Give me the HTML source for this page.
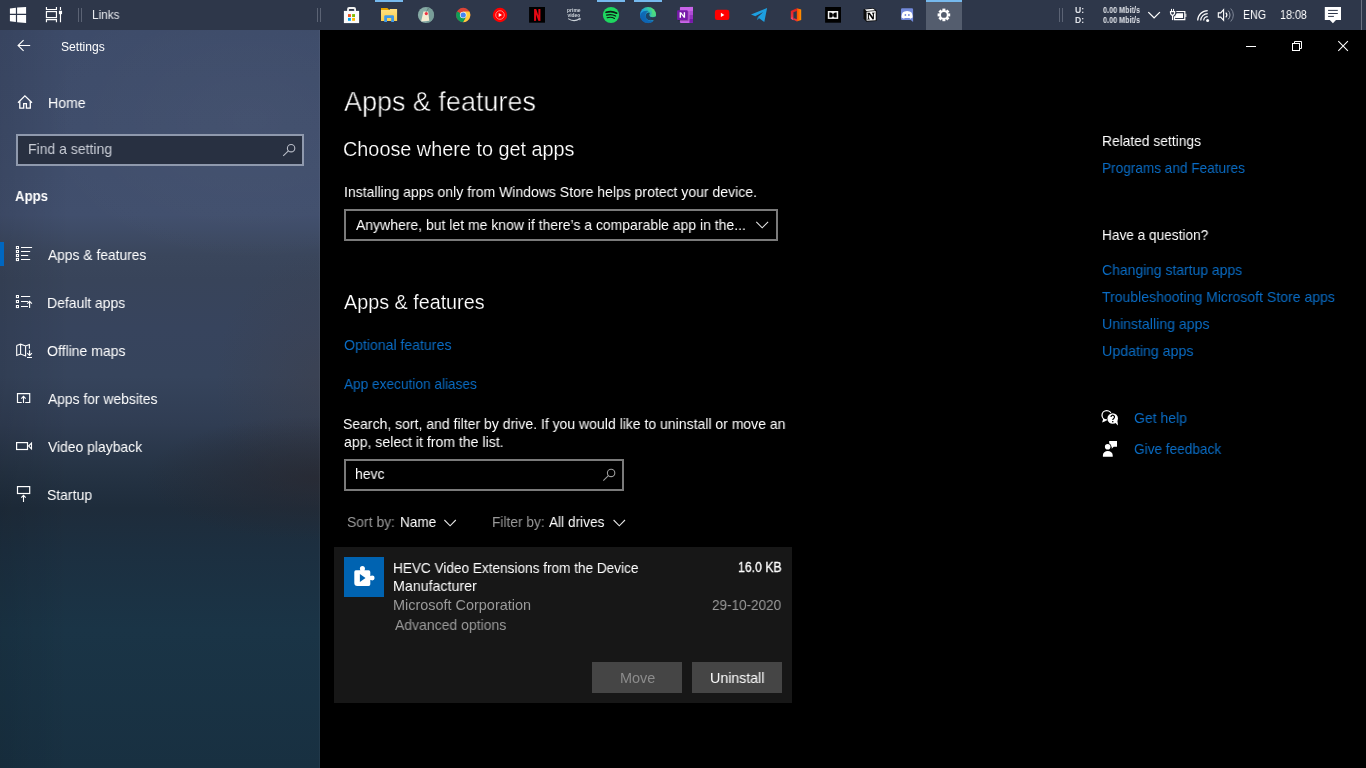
<!DOCTYPE html>
<html><head><meta charset="utf-8"><title>Settings</title>
<style>
*{box-sizing:border-box}
html,body{margin:0;padding:0;width:1366px;height:768px;overflow:hidden;background:#000;font-family:"Liberation Sans",sans-serif}
.t{position:absolute;white-space:pre;transform-origin:0 0;display:block;will-change:transform;-webkit-font-smoothing:antialiased}
.a{position:absolute}
#taskbar{left:0;top:0;width:1366px;height:30px;background:#2e374a}
#side{left:0;top:30px;width:320px;height:738px;background:
 radial-gradient(ellipse 170px 62px at 315px 448px, rgba(40,40,48,.72), rgba(40,40,48,0) 100%),
 radial-gradient(ellipse 110px 130px at 325px 350px, rgba(66,62,68,.38), rgba(66,62,68,0) 100%),
 linear-gradient(90deg, rgba(0,0,0,.09) 0, rgba(0,0,0,0) 70px),
 radial-gradient(ellipse 220px 150px at 250px 90px, rgba(255,255,255,.028), rgba(255,255,255,0) 100%),
 linear-gradient(180deg,#3d4b69 0px,#3f4d6b 100px,#414f6d 185px,#3a465c 225px,#38445a 250px,#37445d 298px,#36445c 346px,#303d53 394px,#253344 442px,#1e2c3b 478px,#1c2f40 520px,#1a3446 600px,#183041 738px)}
#main{left:320px;top:30px;width:1046px;height:738px;background:#000}
.ind{position:absolute;top:0;height:2px;width:28px;background:#76b9ed}
svg{position:absolute;overflow:visible;will-change:transform}

</style></head>
<body>
<div id="taskbar" class="a"></div>
<div id="side" class="a"></div>
<div id="main" class="a"></div>
<!-- taskbar active/indicators -->
<div class="a" style="left:926px;top:0;width:36px;height:30px;background:#545d6e"></div>
<div class="ind" style="left:375px"></div>
<div class="ind" style="left:597px"></div>
<div class="ind" style="left:634px"></div>
<div class="ind" style="left:926px;width:36px"></div>
<!-- taskbar separators -->
<div class="a" style="left:78px;top:8px;width:1px;height:14px;background:#5b6374"></div>
<div class="a" style="left:81px;top:8px;width:1px;height:14px;background:#5b6374"></div>
<div class="a" style="left:317px;top:8px;width:1px;height:14px;background:#5b6374"></div>
<div class="a" style="left:320px;top:8px;width:1px;height:14px;background:#5b6374"></div>
<div class="a" style="left:1059px;top:8px;width:1px;height:14px;background:#5b6374"></div>
<div class="a" style="left:1062px;top:8px;width:1px;height:14px;background:#5b6374"></div>
<div class="a" style="left:1361px;top:0;width:1px;height:30px;background:#6a7181"></div>
<!-- sidebar -->
<div class="a" style="left:0;top:242px;width:4px;height:24px;background:#0067c0"></div>
<div class="a" style="left:16px;top:134px;width:288px;height:32px;border:2px solid #8f99ad;background:#283041"></div>
<div class="a" style="left:319px;top:30px;width:1px;height:738px;background:rgba(255,255,255,.045)"></div>
<!-- main boxes -->
<div class="a" style="left:344px;top:209px;width:434px;height:32px;border:2px solid #7a7a7a;background:#000"></div>
<div class="a" style="left:344px;top:459px;width:280px;height:32px;border:2px solid #7a7a7a;background:#000"></div>
<div class="a" style="left:334px;top:547px;width:458px;height:156px;background:#171717"></div>
<div class="a" style="left:344px;top:557px;width:40px;height:40px;background:#0063b1"></div>
<div class="a" style="left:592px;top:662px;width:90px;height:31px;background:#454545"></div>
<div class="a" style="left:692px;top:662px;width:90px;height:31px;background:#454545"></div>
<svg class="a" style="left:0;top:0" width="1366" height="30" viewBox="0 0 1366 30">
<defs>
<linearGradient id="gEdge" x1="0" y1="1" x2="1" y2="0"><stop offset="0" stop-color="#0d6fd6"/><stop offset=".45" stop-color="#1b9de2"/><stop offset=".8" stop-color="#3fd88c"/><stop offset="1" stop-color="#7bea4e"/></linearGradient>
<linearGradient id="gFold" x1="0" y1="0" x2="0" y2="1"><stop offset="0" stop-color="#ffe082"/><stop offset="1" stop-color="#fccf4a"/></linearGradient>
<linearGradient id="gOffL" x1="0" y1="0" x2="0" y2="1"><stop offset="0" stop-color="#e01b1b"/><stop offset=".7" stop-color="#ef3340"/><stop offset="1" stop-color="#f45aa0"/></linearGradient>
<linearGradient id="gOffR" x1="0" y1="0" x2="1" y2="0"><stop offset="0" stop-color="#ff4a00"/><stop offset="1" stop-color="#ff9500"/></linearGradient>
</defs>
<!-- windows logo -->
<g fill="#fff">
<polygon points="9.9,8.6 15.9,7.8 15.9,13.7 9.9,13.7"/>
<polygon points="17.1,7.6 26.1,6.9 26.1,13.7 17.1,13.7"/>
<polygon points="9.9,15 15.9,15 15.9,22 9.9,21.2"/>
<polygon points="17.1,15 26.1,15 26.1,23.1 17.1,22.2"/>
</g>
<!-- task view -->
<g fill="none" stroke="#fff" stroke-width="1.200">
<rect x="46.450" y="11.550" width="10" height="6.050"/>
<path d="M46.450 6.900V9.500H56.450V6.900"/>
<path d="M46.450 22.200V19.550H56.450V22.200"/>
<path d="M60.480 6.900V9.900M60.480 14V22.200" stroke-width="1.150"/>
</g>
<rect x="58.900" y="10.750" width="3.150" height="3.400" fill="#fff"/>
<!-- store -->
<path d="M347.1 11.2v-2.2a2 2 0 0 1 2-2h4.9a2 2 0 0 1 2 2v2.2h-1.8v-1.6a.7.7 0 0 0-.7-.7h-3.9a.7.7 0 0 0-.7.7v1.6z" fill="#f3f3f3"/>
<rect x="343.9" y="10.9" width="15.2" height="12.2" fill="#fbfbfb"/>
<rect x="348" y="14.1" width="2.9" height="2.9" fill="#f1511b"/>
<rect x="352.1" y="14.1" width="2.9" height="2.9" fill="#80bb00"/>
<rect x="348" y="17.9" width="2.9" height="2.9" fill="#00a3ee"/>
<rect x="352.1" y="17.9" width="2.9" height="2.9" fill="#ffb800"/>
<!-- folder -->
<path d="M381 8h6.4l2 2H381z" fill="#e6a500"/>
<path d="M381 9.9h8.2l.9-.8h7v11.9H381z" fill="url(#gFold)"/>
<path d="M384.2 21.9v-5.5a1.2 1.2 0 0 1 1.2-1.2h7.4a1.2 1.2 0 0 1 1.2 1.2v5.5h-2.8v-4h-4.2v4z" fill="#3f98e6"/>
<!-- tag app -->
<circle cx="426" cy="15" r="8.1" fill="#86aaa5"/>
<path d="M426 6.9a8.1 8.1 0 0 1 0 16.2c3-3 4.5-11 0-16.2z" fill="#6f958f" opacity=".6"/>
<path d="M423.4 11.6l4.7-.2 1.2 9.4-8.2.6z" fill="#f4ecd2"/>
<circle cx="426.3" cy="13.6" r="1.6" fill="#ee3344"/>
<path d="M426.5 11.5l2-3.2" stroke="#55706c" stroke-width=".7"/>
<!-- chrome -->
<circle cx="463.2" cy="15" r="7.15" fill="#db4437"/>
<path d="M463.2 15L457 11.45A7.15 7.15 0 0 0 463.2 22.15L466.3 16.8z" fill="#0f9d58"/>
<path d="M463.2 15l3.1 1.8-3.1 5.35A7.15 7.15 0 0 0 469.4 11.45H463.2z" fill="#ffcd40"/>
<path d="M457 11.45L460.1 16.8 463.2 15z" fill="#0f9d58"/>
<circle cx="463.2" cy="15" r="3.3" fill="#f1f1f1"/>
<circle cx="463.2" cy="15" r="2.6" fill="#4285f4"/>
<!-- yt music -->
<circle cx="500" cy="15" r="7.2" fill="#ff0000"/>
<circle cx="500" cy="15" r="4.3" fill="none" stroke="#ffb0b0" stroke-width=".7"/>
<path d="M498.7 12.9l3.3 2.1-3.3 2.1z" fill="#fff"/>
<!-- netflix -->
<rect x="529.1" y="7" width="15.9" height="15.7" fill="#000"/>
<path d="M534.1 9h2.1l2.2 6.5V9h2v12l-2.1-.3-2.2-6.3v6.4l-2 .2z" fill="#e50914"/>
<!-- prime video -->
<g fill="#dfe5ea" font-family="Liberation Sans, sans-serif" font-weight="700" font-size="5.2" text-anchor="middle" opacity=".9">
<text x="573.8" y="12.4" textLength="13.4" lengthAdjust="spacingAndGlyphs">prime</text>
<text x="573.8" y="17.4" textLength="12.6" lengthAdjust="spacingAndGlyphs">video</text>
</g>
<path d="M568.2 18.6c3.4 2.4 8 2.4 11.6.2" stroke="#dfe5ea" stroke-width="1.1" fill="none" opacity=".9"/>
<path d="M578.6 18.2l1.8.2-.5 1.9" stroke="#dfe5ea" stroke-width=".8" fill="none" opacity=".9"/>
<!-- spotify -->
<circle cx="611" cy="15" r="8.1" fill="#1ed760"/>
<g fill="none" stroke="#0c1a12" stroke-linecap="round">
<path d="M606.1 12.3c3.6-1.1 7.6-.8 10.6.9" stroke-width="1.7"/>
<path d="M606.6 15.1c3.1-.9 6.5-.6 9 .9" stroke-width="1.3"/>
<path d="M607.1 17.7c2.6-.7 5.3-.5 7.4.7" stroke-width="1.1"/>
</g>
<!-- edge -->
<circle cx="648" cy="15" r="8.05" fill="url(#gEdge)"/>
<path d="M640.2 17a8 8 0 0 0 13.6 3.6c-2.6 1.2-6.8.4-8-3.2-1.2-3.8 1.6-6.2 3.2-6.2-5.5-1.8-9.300 2.200-8.800 5.800z" fill="#0c59a4" opacity=".75"/>
<path d="M645.9 14.800c.6-2.300 3.300-3 4.300-1.800-.9.700-1.200 1.900-.5 3 1 1.400 3.700 1.700 6.200 .2-.6 2.600-3 4.300-5.500 4.300-3.200-.2-5.300-2.700-4.500-5.700z" fill="#1c3554" opacity=".85"/>
<path d="M649.700 16c1.400 1.500 4.200 1.500 6.300-.4.400-3.600-2.500-7.100-6.200-8.300 3.700 2.600 2.400 7-.1 8.700z" fill="#5be36e" opacity=".55"/>
<path d="M650.300 17.600c2 .6 4.300.1 6-1.200l.4 1.200-1.800 3.100c-1.600.3-3.600-.6-4.600-3.100z" fill="#2e374a"/>
<!-- onenote -->
<rect x="679.9" y="6.9" width="13.1" height="16" rx=".8" fill="#ca64ea"/>
<rect x="689.4" y="6.9" width="3.6" height="4" fill="#ca64ea"/>
<rect x="689.4" y="10.9" width="3.6" height="4" fill="#ae4bd5"/>
<rect x="689.4" y="14.9" width="3.6" height="4" fill="#9332bf"/>
<rect x="689.4" y="18.9" width="3.6" height="4" fill="#7719aa"/>
<rect x="678.2" y="11.2" width="10.4" height="10" fill="#000" opacity=".25"/>
<rect x="677.1" y="10.2" width="10.6" height="9.8" rx=".8" fill="#7719aa"/>
<path d="M679.600 17.800v-5.600h1.500l2.600 3.600v-3.600h1.400v5.600h-1.400l-2.700-3.700v3.700z" fill="#fff"/>
<!-- youtube -->
<rect x="714.9" y="9.700" width="14.400" height="10.300" rx="2.300" fill="#ff0000"/>
<path d="M720.900 12.800l3.500 2.100-3.500 2.100z" fill="#fff"/>
<!-- telegram -->
<path d="M751 14.500L767.100 8.100 764.300 21.900 757.700 17.300 763.200 12 755.300 16.300z" fill="#1d9fe0"/>
<path d="M757.700 17.300l-.9 3 2.400-1.900z" fill="#1a86c0"/>
<!-- office -->
<path d="M796.800 8.200l-6 2.800v7.700l2.600 1.500v-8l3.400-1.300z" fill="url(#gOffL)"/>
<path d="M792.600 19.200l4.300 2.300 .1-2.300-2.900-1z" fill="#f0303c"/>
<path d="M796.800 8.200l4.400 1.300v10.500l-4.400 1.500z" fill="url(#gOffR)"/>
<!-- dolby -->
<rect x="825.100" y="7" width="15.900" height="15.700" fill="#000"/>
<rect x="827.800" y="11" width="10.400" height="7.900" fill="#f4f4f4"/>
<path d="M829.300 12.400h1a2.600 2.600 0 0 1 0 5.200h-1z" fill="#000"/>
<path d="M836.700 12.400h-1a2.600 2.600 0 0 0 0 5.200h1z" fill="#000"/>
<!-- notion -->
<path d="M863.500 9.200l9.800-1.100 3.300 2.500v10.300l-10.200.8-2.900-3.300z" fill="#0c0c0c"/>
<path d="M864.900 9.600l8.200-.8 2 1.500-8.500.6z" fill="#fff"/>
<path d="M866.600 11.700l9.100-.6v9.100l-9.100.6z" fill="#fff"/>
<path d="M867.500 12.800l2.300-.1 3 4.300v-3.300l-.8-.2v-.7l2.600-.2v.7l-.7.200v5.800l-1.300.1-3.700-5.200v4.300l.9.200v.7l-2.600.2v-.7l.7-.2v-5.100l-.7-.2z" fill="#000"/>
<!-- discord -->
<path d="M902.200 8.300h9.700a1.200 1.200 0 0 1 1.200 1.200v12.600l-2.400-2.200h-8.500a1.200 1.200 0 0 1-1.200-1.200v-9.200a1.200 1.200 0 0 1 1.200-1.200z" fill="#7289da"/>
<path d="M904.600 11.400c1.500-.7 3.500-.7 5 0 .9.200 1.600.5 1.900 1 .9 1.700 1.300 3.600 1.100 5.200-.8.600-1.700.9-2.500 1.100l-.5-.8h-5l-.5.800c-.8-.2-1.700-.5-2.500-1.100-.2-1.600.2-3.500 1.100-5.200.3-.5 1-.8 1.900-1z" fill="#fff"/>
<ellipse cx="905.400" cy="15" rx=".9" ry="1.100" fill="#7289da"/>
<ellipse cx="908.900" cy="15" rx=".9" ry="1.100" fill="#7289da"/>
<!-- settings gear -->
<g transform="translate(943.900 14.900)" fill="#fff">
<g id="teeth"><rect x="-1.500" y="-6.300" width="3" height="12.600"/><rect x="-1.500" y="-6.300" width="3" height="12.600" transform="rotate(45)"/><rect x="-1.500" y="-6.300" width="3" height="12.600" transform="rotate(90)"/><rect x="-1.500" y="-6.300" width="3" height="12.600" transform="rotate(135)"/></g>
<circle r="4.600"/>
<circle r="2.900" fill="#555e6f"/>
</g>
<!-- tray chevron -->
<path d="M1148.300 12.100l5.800 5.800 5.800-5.800" fill="none" stroke="#fff" stroke-width="1.300"/>
<!-- battery -->
<rect x="1171" y="8.900" width="1" height="2.500" fill="#fff"/><rect x="1173.050" y="8.900" width="1" height="2.500" fill="#fff"/>
<g fill="none" stroke="#fff" stroke-width="1.200">
<path d="M1170.500 11.600h4.100v1.500q0 1.500-2.050 2.500q-2.050-1-2.050-2.500z"/>
<path d="M1172.550 15.600V20.100"/>
<path d="M1176.300 11.500H1184.800V19.600H1174.500V16.300"/>
</g>
<path d="M1176.700 13.200H1183V17.900H1175.100V16z" fill="#fff"/>
<rect x="1185.400" y="13.700" width=".900" height="3.300" fill="#fff"/>
<!-- wifi -->
<g fill="none" stroke="#fff" stroke-width="1.200">
<path d="M1197.700 20.600a10 10 0 0 1 10-10"/>
<path d="M1200.700 20.600a7 7 0 0 1 7-7"/>
<path d="M1203.700 20.600a4 4 0 0 1 4-4"/>
</g>
<circle cx="1207.600" cy="20.500" r="1.500" fill="#fff"/>
<!-- volume -->
<path d="M1218.300 12.900h2.400l2.900-3.300v10.800l-2.900-3.300h-2.400z" fill="none" stroke="#fff" stroke-width="1.100"/>
<path d="M1225.800 12.700a3.300 3.300 0 0 1 0 4.600" fill="none" stroke="#fff" stroke-width="1.100"/>
<path d="M1228.200 10.600a6.300 6.300 0 0 1 0 8.800" fill="none" stroke="#aab0bc" stroke-width="1"/>
<path d="M1230.700 8.500a9.300 9.300 0 0 1 0 13" fill="none" stroke="#7f8797" stroke-width="1"/>
<!-- notification -->
<path d="M1324.800 6.900h16.200v13.100h-5l-3.100 3.200-3.100-3.200h-5z" fill="#fff"/>
<path d="M1328.100 10.400h9.700M1328.100 13.500h9.700M1328.100 16.400h5.800" stroke="#2e374a" stroke-width="1"/>
</svg>

<svg class="a" style="left:0;top:0" width="1366" height="768" viewBox="0 0 1366 768">
<g fill="none" stroke="#fff" stroke-width="1.15">
<!-- back arrow -->
<path d="M30.200 45.500H18.200M23.600 40.200L18.100 45.500l5.500 5.300"/>
<!-- home -->
<path d="M18 102.800L24.900 95.900l7.100 6.900" stroke-width="1.300"/>
<path d="M19.800 101.200v7h3.900v-4.600h2.700v4.600h3.900v-7" stroke-width="1.300"/>
<!-- list icon lines -->
<path d="M21 247.500h11.100M21 251.500h9.200M21 255.500h7.200M21 259.500h9.200" stroke-width="1"/>
<!-- default apps lines -->
<path d="M21 296.500h9.200M21 301.500h7M21 306.500h7" stroke-width="1"/>
<path d="M29.600 308v-6.500M27.300 303.700l2.300-2.400 2.300 2.400" stroke-width="1.100"/>
<!-- offline maps -->
<path d="M16.700 345.500l3.900-1.300 5 1.700 3.800-1.300v4.200M29.400 344.600M16.700 345.500v10l3.900-1.400 5 1.800V346M20.600 344.200v9.900" stroke-width="1.100"/>
<path d="M29.600 350.200v5.300M27.300 353.100l2.300 2.400 2.300-2.400M27 357.500h5" stroke-width="1.100"/>
<!-- apps for websites -->
<path d="M21.800 402.500H17.500v-8.900h12.200v8.900H25.200" stroke-width="1.200"/>
<path d="M23.500 403.100v-6.600M21.300 398.600l2.200-2.300 2.200 2.300" stroke-width="1.100"/>
<!-- video -->
<rect x="16.600" y="442.600" width="10.900" height="6.900" stroke-width="1.200"/>
<path d="M28.600 446l2.900-3v6z" stroke-width="1.100"/>
<!-- startup -->
<rect x="17.500" y="486.600" width="12.200" height="6.900" stroke-width="1.200"/>
<path d="M23.500 502v-6.500M21.300 497.700l2.200-2.300 2.200 2.300" stroke-width="1.100"/>
</g>
<!-- list squares -->
<g fill="#fff">
<rect x="15.900" y="246" width="3.100" height="3.100"/><rect x="15.900" y="250" width="3.100" height="3.100"/><rect x="15.900" y="254" width="3.100" height="3.100"/><rect x="15.900" y="258" width="3.100" height="3.100"/>
<rect x="15.900" y="295" width="3.100" height="3.100"/><rect x="15.900" y="300" width="3.100" height="3.100"/><rect x="15.900" y="305" width="3.100" height="3.100"/>
</g>
<g fill="#2c3748">
<rect x="16.950" y="247.050" width="1" height="1"/><rect x="16.950" y="251.050" width="1" height="1"/><rect x="16.950" y="255.050" width="1" height="1"/><rect x="16.950" y="259.050" width="1" height="1"/>
<rect x="16.950" y="296.050" width="1" height="1"/><rect x="16.950" y="301.050" width="1" height="1"/><rect x="16.950" y="306.050" width="1" height="1"/>
</g>
<!-- sidebar search magnifier -->
<g fill="none" stroke="#b9bdc8" stroke-width="1.100">
<circle cx="291.100" cy="148.200" r="3.700"/><path d="M288.400 150.900l-5.200 4.900"/>
</g>
<!-- main search magnifier -->
<g fill="none" stroke="#9c9c9c" stroke-width="1.100">
<circle cx="611.100" cy="472.900" r="3.700"/><path d="M608.400 475.600l-5.100 5"/>
</g>
<!-- dropdown chevrons -->
<g fill="none" stroke="#e4e4e4" stroke-width="1.100">
<path d="M756.300 221.900l5.900 5.900 5.900-5.900"/>
<path d="M444.400 520l5.700 5.800 5.700-5.800"/>
<path d="M613.600 520l5.700 5.800 5.700-5.800"/>
</g>
<!-- window controls -->
<g fill="none" stroke="#fff" stroke-width="1">
<path d="M1246 46.500h10"/>
<rect x="1292.500" y="43.500" width="7" height="7"/>
<path d="M1294.500 43.500v-2h7v7h-2"/>
<path d="M1338.300 41.200l9.600 9.600M1347.900 41.200l-9.600 9.600" stroke-width="1.050"/>
</g>
<!-- HEVC puzzle -->
<g fill="#fff">
<path d="M355.800 570.300h12.900a1.600 1.600 0 0 1 1.600 1.600v12.400a1.600 1.600 0 0 1-1.600 1.600h-11.400a3 3 0 0 1-3-3v-11a1.600 1.600 0 0 1 1.500-1.600z"/>
<circle cx="362.400" cy="568.500" r="2.500"/><rect x="360.500" y="568.500" width="3.800" height="2.500"/>
<circle cx="372.200" cy="578" r="2.400"/><rect x="369.500" y="576.100" width="2.700" height="3.800"/>
</g>
<path d="M359.900 573.900l5.600 4.100-5.600 4z" fill="#0063b1"/>
<!-- get help -->
<circle cx="1106.700" cy="415.300" r="4.700" fill="none" stroke="#fff" stroke-width="1.250"/>
<path d="M1103.300 418.600l-1.200 3.900 4.200-1.800z" fill="#fff"/>
<circle cx="1112.700" cy="418.500" r="5.900" fill="#000"/>
<circle cx="1112.700" cy="418.500" r="5.300" fill="#fff"/>
<path d="M1115 422.600l3 3-.6-4.600z" fill="#fff"/>
<path d="M1111 416.900a1.750 1.750 0 1 1 2.700 1.500c-.7.500-.95.800-.95 1.700" fill="none" stroke="#000" stroke-width="1.200"/><rect x="1112.100" y="421" width="1.300" height="1.300" fill="#000"/>
<!-- give feedback -->
<path d="M1109.200 441h7.800v5.700h-3.300l-2 2v-2h-2.500z" fill="#fff"/>
<circle cx="1107.700" cy="446.800" r="3.600" fill="#000"/>
<circle cx="1107.700" cy="446.800" r="2.800" fill="#fff"/>
<path d="M1102.900 456.700v-1.500a4.900 4.200 0 0 1 9.800 0v1.500z" fill="#fff"/>
</svg>


<span class="t" style="left:91.6px;top:8.8px;font-size:12px;line-height:12px;color:#e8eaee;transform:scaleX(0.9795)">Links</span>
<span class="t" style="left:1075.0px;top:5.8px;font-size:8.6px;line-height:8.6px;color:#dfe2e8;font-weight:700;transform:scaleX(0.9870)">U:</span>
<span class="t" style="left:1075.0px;top:15.7px;font-size:8.6px;line-height:8.6px;color:#dfe2e8;font-weight:700;transform:scaleX(0.9870)">D:</span>
<span class="t" style="left:1103.0px;top:5.8px;font-size:8.6px;line-height:8.6px;color:#dfe2e8;font-weight:700;transform:scaleX(0.8418)">0.00 Mbit/s</span>
<span class="t" style="left:1103.0px;top:15.7px;font-size:8.6px;line-height:8.6px;color:#dfe2e8;font-weight:700;transform:scaleX(0.8418)">0.00 Mbit/s</span>
<span class="t" style="left:1243.2px;top:8.8px;font-size:12px;line-height:12px;color:#ffffff;transform:scaleX(0.8856)">ENG</span>
<span class="t" style="left:1280.2px;top:8.8px;font-size:12px;line-height:12px;color:#ffffff;transform:scaleX(0.8964)">18:08</span>
<span class="t" style="left:61.2px;top:40.7px;font-size:12px;line-height:12px;color:#ffffff;transform:scaleX(1.0092)">Settings</span>
<span class="t" style="left:47.5px;top:95.9px;font-size:14.4px;line-height:14.4px;color:#ffffff;transform:scaleX(0.9773)">Home</span>
<span class="t" style="left:27.6px;top:141.6px;font-size:14.4px;line-height:14.4px;color:#c9cdd6;transform:scaleX(0.9722)">Find a setting</span>
<span class="t" style="left:15.3px;top:188.8px;font-size:14.4px;line-height:14.4px;color:#ffffff;font-weight:700;transform:scaleX(0.9160)">Apps</span>
<span class="t" style="left:48.2px;top:247.8px;font-size:14.4px;line-height:14.4px;color:#ffffff;transform:scaleX(0.9593)">Apps &amp; features</span>
<span class="t" style="left:46.6px;top:295.8px;font-size:14.4px;line-height:14.4px;color:#ffffff;transform:scaleX(0.9687)">Default apps</span>
<span class="t" style="left:47.4px;top:343.8px;font-size:14.4px;line-height:14.4px;color:#ffffff;transform:scaleX(0.9760)">Offline maps</span>
<span class="t" style="left:48.2px;top:391.8px;font-size:14.4px;line-height:14.4px;color:#ffffff;transform:scaleX(0.9627)">Apps for websites</span>
<span class="t" style="left:48.2px;top:439.8px;font-size:14.4px;line-height:14.4px;color:#ffffff;transform:scaleX(0.9657)">Video playback</span>
<span class="t" style="left:46.6px;top:487.8px;font-size:14.4px;line-height:14.4px;color:#ffffff;transform:scaleX(0.9697)">Startup</span>
<span class="t" style="left:343.8px;top:88.3px;font-size:28.0px;line-height:28.0px;color:#ffffff;-webkit-text-stroke:.5px #000;transform:scaleX(0.9630)">Apps &amp; features</span>
<span class="t" style="left:342.5px;top:140.3px;font-size:19.7px;line-height:19.7px;color:#ffffff;-webkit-text-stroke:.2px #000;transform:scaleX(1.0073)">Choose where to get apps</span>
<span class="t" style="left:343.5px;top:184.8px;font-size:14.4px;line-height:14.4px;color:#ffffff;transform:scaleX(0.9741)">Installing apps only from Windows Store helps protect your device.</span>
<span class="t" style="left:356.1px;top:217.8px;font-size:14.4px;line-height:14.4px;color:#ffffff;transform:scaleX(0.9716)">Anywhere, but let me know if there’s a comparable app in the...</span>
<span class="t" style="left:344.1px;top:293.3px;font-size:19.7px;line-height:19.7px;color:#ffffff;-webkit-text-stroke:.2px #000;transform:scaleX(1.0033)">Apps &amp; features</span>
<span class="t" style="left:344.1px;top:338.1px;font-size:14.4px;line-height:14.4px;color:#0a6cc4;transform:scaleX(0.9802)">Optional features</span>
<span class="t" style="left:344.1px;top:376.8px;font-size:14.4px;line-height:14.4px;color:#0a6cc4;transform:scaleX(0.9489)">App execution aliases</span>
<span class="t" style="left:343.3px;top:417.0px;font-size:14.4px;line-height:14.4px;color:#ffffff;transform:scaleX(0.9740)">Search, sort, and filter by drive. If you would like to uninstall or move an</span>
<span class="t" style="left:344.1px;top:434.8px;font-size:14.4px;line-height:14.4px;color:#ffffff;transform:scaleX(0.9779)">app, select it from the list.</span>
<span class="t" style="left:355.3px;top:466.6px;font-size:14.4px;line-height:14.4px;color:#ffffff;transform:scaleX(0.9709)">hevc</span>
<span class="t" style="left:347.4px;top:514.7px;font-size:14.4px;line-height:14.4px;color:#9a9a9a;transform:scaleX(0.9658)">Sort by:</span>
<span class="t" style="left:399.5px;top:514.7px;font-size:14.4px;line-height:14.4px;color:#ffffff;transform:scaleX(0.9403)">Name</span>
<span class="t" style="left:491.6px;top:514.7px;font-size:14.4px;line-height:14.4px;color:#9a9a9a;transform:scaleX(0.9531)">Filter by:</span>
<span class="t" style="left:548.5px;top:514.7px;font-size:14.4px;line-height:14.4px;color:#ffffff;transform:scaleX(0.9488)">All drives</span>
<span class="t" style="left:393.1px;top:561.0px;font-size:14.4px;line-height:14.4px;color:#ffffff;transform:scaleX(0.9450)">HEVC Video Extensions from the Device</span>
<span class="t" style="left:393.1px;top:578.8px;font-size:14.4px;line-height:14.4px;color:#ffffff;transform:scaleX(0.9882)">Manufacturer</span>
<span class="t" style="left:393.1px;top:598.2px;font-size:14.4px;line-height:14.4px;color:#9a9a9a;transform:scaleX(1.0032)">Microsoft Corporation</span>
<span class="t" style="left:394.5px;top:617.9px;font-size:14.4px;line-height:14.4px;color:#9a9a9a;transform:scaleX(0.9722)">Advanced options</span>
<span class="t" style="left:737.8px;top:560.0px;font-size:14.4px;line-height:14.4px;color:#ffffff;-webkit-text-stroke:.3px #fff;transform:scaleX(0.8528)">16.0 KB</span>
<span class="t" style="left:712.3px;top:598.2px;font-size:14.4px;line-height:14.4px;color:#9a9a9a;transform:scaleX(0.9404)">29-10-2020</span>
<span class="t" style="left:619.6px;top:670.5px;font-size:14.4px;line-height:14.4px;color:#8c8c8c;transform:scaleX(1.0056)">Move</span>
<span class="t" style="left:709.6px;top:670.5px;font-size:14.4px;line-height:14.4px;color:#ffffff;transform:scaleX(0.9869)">Uninstall</span>
<span class="t" style="left:1101.6px;top:133.6px;font-size:14.4px;line-height:14.4px;color:#ffffff;transform:scaleX(0.9593)">Related settings</span>
<span class="t" style="left:1101.6px;top:160.7px;font-size:14.4px;line-height:14.4px;color:#0a6cc4;transform:scaleX(0.9451)">Programs and Features</span>
<span class="t" style="left:1101.6px;top:227.8px;font-size:14.4px;line-height:14.4px;color:#ffffff;transform:scaleX(0.9488)">Have a question?</span>
<span class="t" style="left:1102.4px;top:262.8px;font-size:14.4px;line-height:14.4px;color:#0a6cc4;transform:scaleX(0.9681)">Changing startup apps</span>
<span class="t" style="left:1102.4px;top:289.6px;font-size:14.4px;line-height:14.4px;color:#0a6cc4;transform:scaleX(0.9755)">Troubleshooting Microsoft Store apps</span>
<span class="t" style="left:1101.6px;top:316.5px;font-size:14.4px;line-height:14.4px;color:#0a6cc4;transform:scaleX(0.9795)">Uninstalling apps</span>
<span class="t" style="left:1101.6px;top:343.8px;font-size:14.4px;line-height:14.4px;color:#0a6cc4;transform:scaleX(0.9861)">Updating apps</span>
<span class="t" style="left:1134.0px;top:410.6px;font-size:14.4px;line-height:14.4px;color:#0a6cc4;transform:scaleX(0.9705)">Get help</span>
<span class="t" style="left:1134.0px;top:441.7px;font-size:14.4px;line-height:14.4px;color:#0a6cc4;transform:scaleX(0.9483)">Give feedback</span>
</body></html>
